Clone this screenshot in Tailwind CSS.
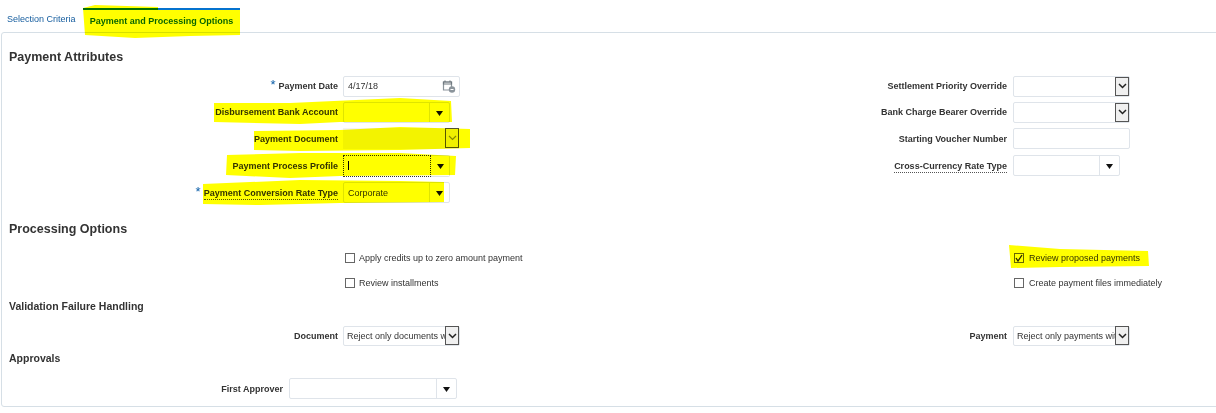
<!DOCTYPE html>
<html lang="en">
<head>
  <meta charset="UTF-8" />
  <title>Payment and Processing Options</title>
  <script src="https://cdn.jsdelivr.net/npm/@tailwindcss/browser@4"></script>
</head>
<body class="relative h-[413px] w-[1216px] overflow-hidden bg-white font-['Liberation_Sans',Arial,sans-serif] text-[9px] text-[#333]">
  <!-- tabs -->
  <div class="flex h-[32px] items-end pl-[7px]">
    <a class="mr-[8px] flex h-[24px] w-[68px] items-center whitespace-nowrap text-[#145c9e]">Selection Criteria</a>
    <a class="-mb-px flex h-[25px] w-[157px] items-center justify-center whitespace-nowrap border-t-2 border-[#0572ce] font-bold text-[#0a660a]">Payment and Processing Options</a>
  </div>

  <!-- panel -->
  <div class="ml-px h-[375px] w-[1240px] rounded-[3px] border border-[#d6dfe6] pl-[7px]">
    <h2 class="pt-[16px] text-[12.5px] leading-[16px] font-bold">Payment Attributes</h2>

    <div class="-ml-[7px] mt-[8px] grid grid-cols-[336px_300px_369px_1fr] grid-rows-[26px_26px_27px_27px_27px] items-center font-bold">
      <div class="pt-[2px] text-right"><span class="mr-[3px] text-[13px] leading-[10px] font-normal text-[#0b5ea8]">*</span>Payment Date</div>
      <div class="ml-[5px] flex h-[21px] w-[117px] items-center justify-between rounded-[2px] border border-[#dfe4ea] pl-[4px] pr-[3px] font-normal">
        <span class="pt-[2px]">4/17/18</span>
        <svg width="14" height="14" viewBox="0 0 14 14"><path d="M1.5 3h8v8h-8z" fill="none" stroke="#8b949b" stroke-width="1.2"/><path d="M1.5 3h8v2h-8zM3 1.5v2M8 1.5v2" fill="none" stroke="#6f787f" stroke-width="1.2"/><circle cx="10" cy="10.5" r="3.2" fill="#8b949b"/><path d="M8.5 10.5h3" stroke="#fff"/></svg>
      </div>
      <div class="pt-[2px] text-right">Settlement Priority Override</div>
      <div class="ml-[6px] flex h-[21px] w-[117px] justify-end rounded-[2px] border border-[#dfe4ea]">
        <span class="flex h-[19px] w-[14px] items-center justify-center border border-[#555] bg-[#f0f0f0]"><svg width="9" height="6" viewBox="0 0 9 6"><path d="M1 1l3.5 3.5L8 1" fill="none" stroke="#222" stroke-width="1.5"/></svg></span>
      </div>

      <div class="pt-[2px] text-right">Disbursement Bank Account</div>
      <div class="ml-[5px] flex h-[21px] w-[107px] justify-end rounded-[2px] border border-[#dfe4ea]">
        <span class="flex w-[20px] items-center justify-center border-l border-[#dfe4ea] pt-[2px]"><svg width="7" height="5" viewBox="0 0 7 5"><path d="M0 0h7L3.500 5z" fill="#111"/></svg></span>
      </div>
      <div class="pt-[2px] text-right">Bank Charge Bearer Override</div>
      <div class="ml-[6px] flex h-[21px] w-[117px] justify-end rounded-[2px] border border-[#dfe4ea]">
        <span class="flex h-[19px] w-[14px] items-center justify-center border border-[#555] bg-[#f0f0f0]"><svg width="9" height="6" viewBox="0 0 9 6"><path d="M1 1l3.500 3.500L8 1" fill="none" stroke="#222" stroke-width="1.5"/></svg></span>
      </div>

      <div class="pt-[2px] text-right">Payment Document</div>
      <div class="ml-[5px] flex h-[21px] w-[116px] justify-end bg-[#f3f3f3]">
        <span class="flex h-[20px] w-[14px] items-center justify-center border border-[#555] bg-[#f0f0f0]"><svg width="9" height="6" viewBox="0 0 9 6"><path d="M1 1l3.500 3.500L8 1" fill="none" stroke="#888" stroke-width="1.2"/></svg></span>
      </div>
      <div class="pt-[2px] text-right">Starting Voucher Number</div>
      <div class="ml-[6px] h-[21px] w-[117px] rounded-[2px] border border-[#dfe4ea]"></div>

      <div class="pt-[2px] text-right">Payment Process Profile</div>
      <div class="ml-[5px] flex h-[22px] w-[107px]">
        <span class="flex w-[88px] items-center border border-dotted border-[#333] pl-[4px]"><span class="h-[9px] w-px bg-black"></span></span>
        <span class="flex w-[19px] items-center justify-center rounded-r-[2px] border border-l-0 border-[#dfe4ea] pt-[2px]"><svg width="7" height="5" viewBox="0 0 7 5"><path d="M0 0h7L3.500 5z" fill="#111"/></svg></span>
      </div>
      <div class="pt-[2px] text-right"><span class="border-b border-dotted border-[#555] pb-px">Cross-Currency Rate Type</span></div>
      <div class="ml-[6px] flex h-[21px] w-[107px] justify-end rounded-[2px] border border-[#dfe4ea]">
        <span class="flex w-[20px] items-center justify-center border-l border-[#dfe4ea] pt-[2px]"><svg width="7" height="5" viewBox="0 0 7 5"><path d="M0 0h7L3.500 5z" fill="#111"/></svg></span>
      </div>

      <div class="pt-[2px] text-right"><span class="mr-[3px] text-[13px] leading-[10px] font-normal text-[#0b5ea8]">*</span><span class="border-b border-dotted border-[#555] pb-px">Payment Conversion Rate Type</span></div>
      <div class="ml-[5px] flex h-[21px] w-[107px] items-center justify-between rounded-[2px] border border-[#dfe4ea] pl-[4px] font-normal">
        <span class="pt-[2px]">Corporate</span>
        <span class="flex h-full w-[20px] items-center justify-center border-l border-[#dfe4ea] pt-[2px]"><svg width="7" height="5" viewBox="0 0 7 5"><path d="M0 0h7L3.500 5z" fill="#111"/></svg></span>
      </div>
      <div></div><div></div>
    </div>

    <h2 class="mt-[15px] text-[12.5px] leading-[16px] font-bold">Processing Options</h2>

    <div class="-ml-[7px] mt-[9px] grid grid-cols-[343px_669px_1fr] grid-rows-[25px_25px]">
      <div></div>
      <label class="flex items-center gap-[4px]"><span class="-mt-px h-[10px] w-[10px] border border-[#666]"></span>Apply credits up to zero amount payment</label>
      <label class="flex items-center gap-[5px]"><span class="-mt-px flex h-[10px] w-[10px] items-center justify-center border border-[#666]"><svg width="8" height="8" viewBox="0 0 8 8"><path d="M1 4l2 3 4-6" fill="none" stroke="#222" stroke-width="1.300"/></svg></span>Review proposed payments</label>
      <div></div>
      <label class="flex items-center gap-[4px]"><span class="-mt-px h-[10px] w-[10px] border border-[#666]"></span>Review installments</label>
      <label class="flex items-center gap-[5px]"><span class="-mt-px h-[10px] w-[10px] border border-[#666]"></span>Create payment files immediately</label>
    </div>

    <h3 class="mt-[3px] text-[10.5px] leading-[14px] font-bold">Validation Failure Handling</h3>

    <div class="-ml-[7px] mt-[12px] grid h-[21px] grid-cols-[336px_300px_369px_1fr] items-center">
      <div class="pt-[2px] text-right font-bold">Document</div>
      <div class="ml-[5px] flex h-[20px] w-[117px] items-center rounded-[2px] border border-[#dfe4ea] pl-[3px]">
        <span class="w-[99px] overflow-hidden whitespace-nowrap pt-[2px]">Reject only documents with errors</span>
        <span class="ml-auto flex h-[19px] w-[14px] items-center justify-center border border-[#555] bg-[#f0f0f0]"><svg width="9" height="6" viewBox="0 0 9 6"><path d="M1 1l3.500 3.500L8 1" fill="none" stroke="#222" stroke-width="1.5"/></svg></span>
      </div>
      <div class="pt-[2px] text-right font-bold">Payment</div>
      <div class="ml-[6px] flex h-[20px] w-[117px] items-center rounded-[2px] border border-[#dfe4ea] pl-[3px]">
        <span class="w-[98px] overflow-hidden whitespace-nowrap pt-[2px]">Reject only payments with errors</span>
        <span class="ml-auto flex h-[19px] w-[14px] items-center justify-center border border-[#555] bg-[#f0f0f0]"><svg width="9" height="6" viewBox="0 0 9 6"><path d="M1 1l3.500 3.500L8 1" fill="none" stroke="#222" stroke-width="1.5"/></svg></span>
      </div>
    </div>

    <h3 class="mt-[5px] text-[10.5px] leading-[14px] font-bold">Approvals</h3>

    <div class="-ml-[7px] mt-[13px] flex h-[21px] items-center">
      <div class="w-[281px] pt-[2px] text-right font-bold">First Approver</div>
      <div class="ml-[6px] flex h-[21px] w-[168px] justify-end rounded-[2px] border border-[#dfe4ea]">
        <span class="flex w-[20px] items-center justify-center border-l border-[#dfe4ea] pt-[2px]"><svg width="7" height="5" viewBox="0 0 7 5"><path d="M0 0h7L3.500 5z" fill="#111"/></svg></span>
      </div>
    </div>
  </div>

  <!-- highlighter marks drawn over the screenshot -->
  <svg class="pointer-events-none absolute inset-0 mix-blend-multiply" width="1216" height="413" viewBox="0 0 1216 413">
    <g fill="#ffff00">
      <path d="M83 8L95 5L158 7L158 10L240 10L240 35L190 36L135 38L85 35z"/>
      <path d="M214 103L290 103L400 98L451 101L452 122L340 122L300 124L214 122z"/>
      <path d="M254 131L340 130L400 127L470 129L470 148L400 150L300 151L254 150z"/>
      <path d="M227 155L300 153L400 153L456 156L455 175L340 176L290 178L226 175z"/>
      <path d="M203 184L300 180L400 181L444 182L444 202L340 203L260 205L203 204z"/>
      <path d="M1009 245L1060 249L1148 251L1149 266L1060 267L1011 268z"/>
    </g>
  </svg>
</body>
</html>
